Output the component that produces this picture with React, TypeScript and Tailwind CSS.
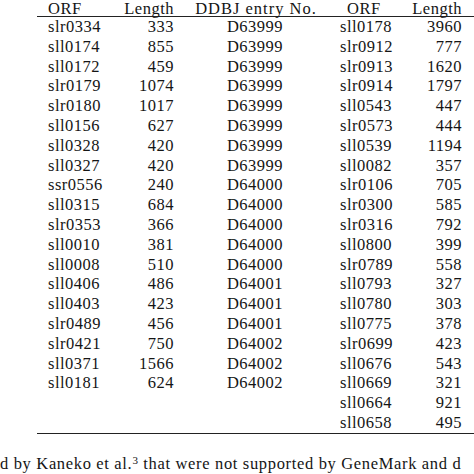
import React from "react";

const left: [string, string, string][] = [
  ["slr0334", "333", "D63999"],
  ["sll0174", "855", "D63999"],
  ["sll0172", "459", "D63999"],
  ["slr0179", "1074", "D63999"],
  ["slr0180", "1017", "D63999"],
  ["sll0156", "627", "D63999"],
  ["sll0328", "420", "D63999"],
  ["sll0327", "420", "D63999"],
  ["ssr0556", "240", "D64000"],
  ["sll0315", "684", "D64000"],
  ["slr0353", "366", "D64000"],
  ["sll0010", "381", "D64000"],
  ["sll0008", "510", "D64000"],
  ["sll0406", "486", "D64001"],
  ["sll0403", "423", "D64001"],
  ["slr0489", "456", "D64001"],
  ["slr0421", "750", "D64002"],
  ["sll0371", "1566", "D64002"],
  ["sll0181", "624", "D64002"],
];

const right: [string, string][] = [
  ["sll0178", "3960"],
  ["slr0912", "777"],
  ["slr0913", "1620"],
  ["slr0914", "1797"],
  ["sll0543", "447"],
  ["slr0573", "444"],
  ["sll0539", "1194"],
  ["sll0082", "357"],
  ["slr0106", "705"],
  ["slr0300", "585"],
  ["slr0316", "792"],
  ["sll0800", "399"],
  ["slr0789", "558"],
  ["sll0793", "327"],
  ["sll0780", "303"],
  ["sll0775", "378"],
  ["slr0699", "423"],
  ["sll0676", "543"],
  ["sll0669", "321"],
  ["sll0664", "921"],
  ["sll0658", "495"],
];

const cols = "grid grid-cols-[83px_60px_150px_70px_74px]";

export default function App() {
  return (
    <div className="w-[474px] h-[474px] overflow-hidden bg-white text-[#151515] font-['Liberation_Serif',serif] text-[16.5px]">
      <div className="ml-[37px] w-[437px] tracking-[0.03em]">
        {/* header */}
        <div className={`${cols} h-[17px] leading-[17px] border-b-[1.5px] border-[#222]`}>
          <div className="pl-[11px]">ORF</div>
          <div className="text-right pr-[6px]">Length</div>
          <div className="text-center tracking-[0.06em] pl-[2px]">DDBJ entry No.</div>
          <div className="pl-[17px]">ORF</div>
          <div className="text-right pr-[12px]">Length</div>
        </div>

        {/* rows */}
        <div>
          {right.map((r, i) => {
            const l = left[i];
            return (
              <div key={r[0]} className={`${cols} h-[19.8px] leading-[19.8px]`}>
                <div className="pl-[11px]">{l ? l[0] : ""}</div>
                <div className="text-right pr-[6px]">{l ? l[1] : ""}</div>
                <div className="text-center">{l ? l[2] : ""}</div>
                <div className="pl-[10px]">{r[0]}</div>
                <div className="text-right pr-[12px]">{r[1]}</div>
              </div>
            );
          })}
        </div>

        <div className="mt-[0.5px] border-t-[1.5px] border-[#222]" />
      </div>

      <p className="mt-[20px] whitespace-nowrap leading-[20px] tracking-[0.04em]">
        d by Kaneko et al.<sup className="text-[11px]">3</sup> that were not supported by GeneMark and d
      </p>
    </div>
  );
}
